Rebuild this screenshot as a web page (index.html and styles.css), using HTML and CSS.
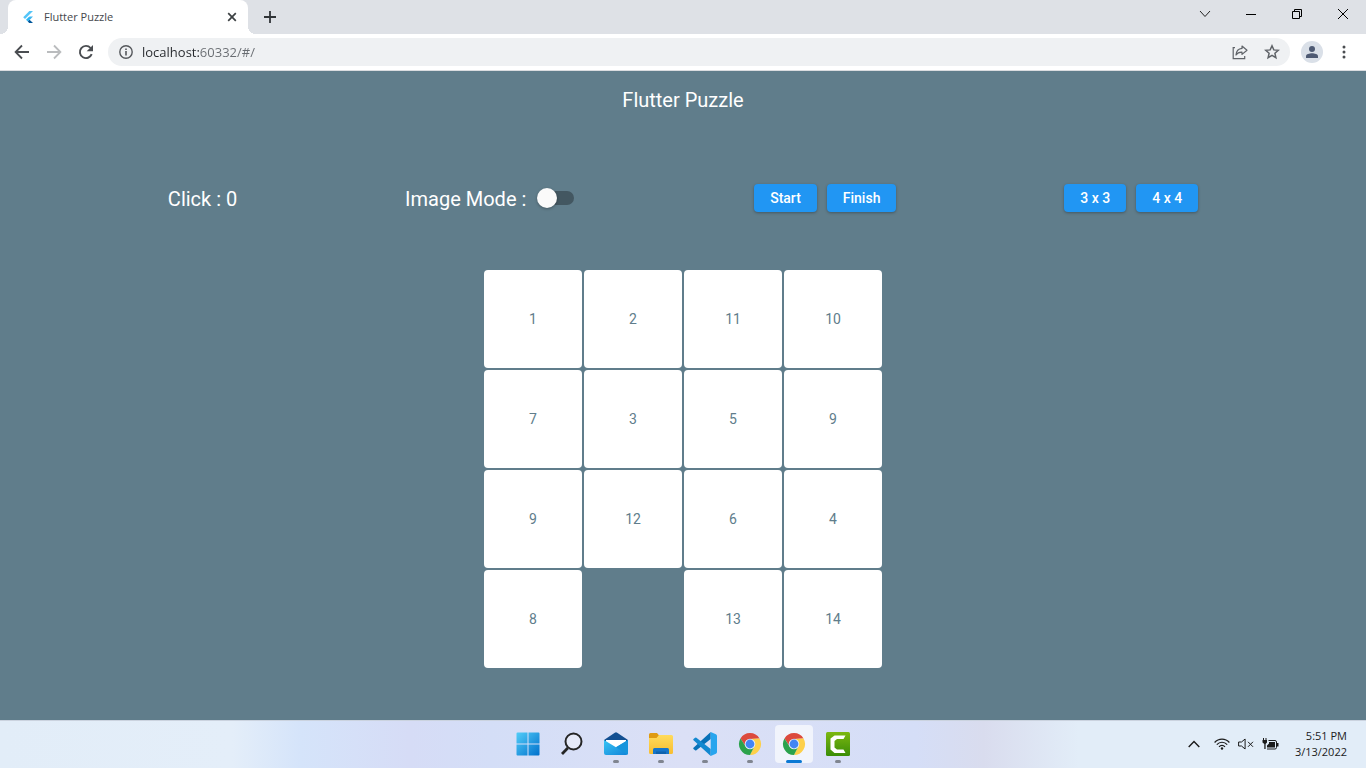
FILE: index.html
```html
<!DOCTYPE html>
<html lang="en">

<head>
    <meta charset="utf-8">
    <meta name="viewport" content="width=device-width, initial-scale=1">
    <title>Flutter Puzzle</title>
    <link rel="stylesheet" href="styles.css">
</head>

<body>

    <!-- browser window -->
    <header class="browser">
        <div class="tab-strip">
            <div class="tab">
                <svg class="favicon" width="12" height="14" viewBox="0 0 12 14">
                    <path fill="#54c5f8" d="M7.4 1H11L3 9 1.200 7.200z" />
                    <path fill="#40b6f0" d="M7.400 6.600H11L8.400 9.200 6 9.200z" />
                    <path fill="#29b6f6" d="M4 9.800l2.800-2.800 1.800 1.800-2.800 2.800z" />
                    <path fill="#01579b" d="M5.800 11.600l1.800-1.800L11 13H7.200z" />
                </svg>
                <span class="tab-title">Flutter Puzzle</span>
                <button class="tab-close" aria-label="Close tab">
                    <svg width="10" height="10" viewBox="0 0 10 10"><path d="M1.200 1.200l7.600 7.600M8.800 1.200L1.200 8.800" stroke="#3c4043" stroke-width="1.700" /></svg>
                </button>
            </div>
            <button class="new-tab" aria-label="New tab">
                <svg width="12" height="12" viewBox="0 0 12 12"><path d="M6 0v12M0 6h12" stroke="#303438" stroke-width="1.800" /></svg>
            </button>
            <div class="window-buttons">
                <button aria-label="Search tabs"><svg width="12" height="12" viewBox="0 0 12 12"><path d="M1 3l5 5.500L11 3" fill="none" stroke="#222" /></svg></button>
                <button aria-label="Minimize"><svg width="10" height="12" viewBox="0 0 10 12"><path d="M0 6.500h10" stroke="#000" /></svg></button>
                <button aria-label="Restore"><svg width="10" height="10" viewBox="0 0 10 10"><path d="M.5 2.500h7v7h-7zM2.500 2.500v-2h7v7h-2" fill="none" stroke="#000" /></svg></button>
                <button aria-label="Close"><svg width="12" height="12" viewBox="0 0 12 12"><path d="M1 1l10 10M11 1L1 11" stroke="#000" /></svg></button>
            </div>
        </div>

        <div class="toolbar">
            <button class="tool" aria-label="Back">
                <svg width="16" height="16" viewBox="0 0 16 16"><path d="M15 8H2M8 1.500L1.600 8 8 14.500" fill="none" stroke="#4a4d51" stroke-width="1.800" /></svg>
            </button>
            <button class="tool" aria-label="Forward">
                <svg width="16" height="16" viewBox="0 0 16 16"><path d="M1 8h13M8 1.500L14.400 8 8 14.500" fill="none" stroke="#babcbe" stroke-width="1.800" /></svg>
            </button>
            <button class="tool" aria-label="Reload">
                <svg width="16" height="16" viewBox="0 0 16 16">
                    <path d="M13.700 10.200A6.100 6.100 0 1 1 12.600 4" fill="none" stroke="#4a4d51" stroke-width="1.900" />
                    <path d="M15 1v6.300H8.700z" fill="#4a4d51" />
                </svg>
            </button>
            <div class="address">
                <svg class="info" width="14" height="14" viewBox="0 0 14 14">
                    <circle cx="7" cy="7" r="6.200" fill="none" stroke="#55585c" stroke-width="1.400" />
                    <path d="M7 6v4.500M7 3.400v1.500" stroke="#55585c" stroke-width="1.600" />
                </svg>
                <input class="url" type="text" aria-label="Address" value="localhost:60332/#/" spellcheck="false">
                <button class="tool" aria-label="Share">
                    <svg width="16" height="16" viewBox="0 0 16 16" fill="none" stroke="#5f6368" stroke-width="1.200">
                        <path d="M3 3.600H1.200v11h11.500V12" />
                        <path d="M10 2L15 6.200 10 10.400V8.200C7.200 8.100 5.300 9 4 11 4.300 7.200 6.300 4.800 10 4.400z" stroke-linejoin="round" />
                    </svg>
                </button>
                <button class="tool" aria-label="Bookmark">
                    <svg width="16" height="16" viewBox="0 0 16 16"><path d="M8 1.800l1.800 4.100 4.500.4-3.400 3 1 4.400L8 11.400l-3.900 2.300 1-4.400-3.400-3 4.500-.4z" fill="none" stroke="#5f6368" stroke-width="1.500" /></svg>
                </button>
            </div>
            <button class="avatar" aria-label="Profile">
                <svg width="12" height="12" viewBox="0 0 12 12" fill="#4e5a73"><circle cx="6" cy="3" r="3" /><path d="M0 12v-1.800C0 8.200 3.500 7.300 6 7.300s6 .9 6 2.900V12z" /></svg>
            </button>
            <button class="tool menu" aria-label="Menu">
                <svg width="4" height="14" viewBox="0 0 4 14" fill="#4a4d51"><circle cx="2" cy="2" r="1.500" /><circle cx="2" cy="7" r="1.500" /><circle cx="2" cy="12" r="1.500" /></svg>
            </button>
        </div>
    </header>

    <!-- puzzle -->
    <main class="app">
        <h1 class="app-title">Flutter Puzzle</h1>

        <div class="controls">
            <p class="counter">Click : 0</p>
            <div class="image-mode">
                <label for="imageMode">Image Mode :</label>
                <input class="switch" type="checkbox" id="imageMode" role="switch">
            </div>
            <div class="button-group">
                <button class="btn">Start</button>
                <button class="btn">Finish</button>
            </div>
            <div class="button-group">
                <button class="btn">3 x 3</button>
                <button class="btn">4 x 4</button>
            </div>
        </div>

        <div class="board">
            <button class="tile">1</button>
            <button class="tile">2</button>
            <button class="tile">11</button>
            <button class="tile">10</button>
            <button class="tile">7</button>
            <button class="tile">3</button>
            <button class="tile">5</button>
            <button class="tile">9</button>
            <button class="tile">9</button>
            <button class="tile">12</button>
            <button class="tile">6</button>
            <button class="tile">4</button>
            <button class="tile">8</button>
            <span class="empty"></span>
            <button class="tile">13</button>
            <button class="tile">14</button>
        </div>
    </main>

    <!-- taskbar -->
    <footer class="taskbar">
        <svg width="0" height="0" class="defs">
            <defs>
                <linearGradient id="win" x1="0" y1="0" x2="1" y2="1">
                    <stop offset="0" stop-color="#52cdf8" />
                    <stop offset="1" stop-color="#0070cc" />
                </linearGradient>
                <linearGradient id="mailFront" x1="0" y1="0" x2="1" y2="1">
                    <stop offset="0" stop-color="#38c4f4" />
                    <stop offset="1" stop-color="#1183d8" />
                </linearGradient>
                <linearGradient id="folderFront" x1="0" y1="0" x2="0" y2="1">
                    <stop offset="0" stop-color="#ffdb5c" />
                    <stop offset="1" stop-color="#f8bd30" />
                </linearGradient>
                <linearGradient id="camtasia" x1="0" y1="0" x2="0" y2="1">
                    <stop offset="0" stop-color="#7cb810" />
                    <stop offset="1" stop-color="#3a8d08" />
                </linearGradient>
                <symbol id="chrome" viewBox="0 0 24 24">
                    <path fill="#dc4a3d" d="M2.470 6.500A11 11 0 0 1 21.530 6.500L12 7 7.670 14.500z" />
                    <path fill="#fdd04a" d="M21.530 6.500A11 11 0 0 1 12 23L16.330 14.500 12 7z" />
                    <path fill="#2ba24c" d="M12 23A11 11 0 0 1 2.470 6.500L7.670 14.500H16.330z" />
                    <circle cx="12" cy="12" r="5.300" fill="#e8effb" />
                    <circle cx="12" cy="12" r="4.400" fill="#4285f4" />
                </symbol>
            </defs>
        </svg>

        <nav class="task-apps">
            <button class="task" aria-label="Start menu">
                <svg width="24" height="24" viewBox="0 0 24 24" fill="url(#win)"><path d="M1.500.5h10v11H.5v-10a1 1 0 0 1 1-1zM12.500.5h10a1 1 0 0 1 1 1v10h-11zM.5 12.500h11v11h-10a1 1 0 0 1-1-1zM12.500 12.500h11v10a1 1 0 0 1-1 1h-10z" /></svg>
            </button>
            <button class="task" aria-label="Search">
                <svg width="24" height="24" viewBox="0 0 24 24" fill="none" stroke="#252525"><circle cx="13.500" cy="9.500" r="8" fill="#e6eaf8" stroke-width="2" /><path d="M7.800 16L2 22" stroke-width="2.800" /></svg>
            </button>
            <button class="task open" aria-label="Mail">
                <svg width="26" height="24" viewBox="0 0 26 24">
                    <path fill="#124f91" d="M1 8L11.800.8a2 2 0 0 1 2.400 0L25 8v4H1z" />
                    <path fill="#fff" d="M3 8h20v8H3z" />
                    <path fill="url(#mailFront)" d="M1 8l12 7.200L25 8v13a2 2 0 0 1-2 2H3a2 2 0 0 1-2-2z" />
                    <path fill="#1694dc" d="M25 8v13c0 .7-.3 1.200-.8 1.600L13 15.200z" />
                </svg>
            </button>
            <button class="task open" aria-label="Files">
                <svg width="26" height="24" viewBox="0 0 26 24">
                    <path fill="#df9b13" d="M1 2.500A1.500 1.500 0 0 1 2.500 1H9l2.500 3-3 3H1z" />
                    <path fill="url(#folderFront)" d="M1 6h7.500L11 3h12.500A1.500 1.500 0 0 1 25 4.500v16a1.500 1.500 0 0 1-1.500 1.500h-21A1.500 1.500 0 0 1 1 20.500z" />
                    <path fill="#1675ca" d="M5 22v-4.500A1.500 1.500 0 0 1 6.500 16h13a1.500 1.500 0 0 1 1.500 1.500V22z" />
                    <path fill="#0f62ae" d="M8 19.500h10V22H8z" />
                </svg>
            </button>
            <button class="task open" aria-label="Code editor">
                <svg width="26" height="24" viewBox="0 0 26 24">
                    <path fill="#0871b8" d="M18.700 0L1.500 15.700a.8.800 0 0 0 0 1.200l1.600 1.400a1 1 0 0 0 1.300 0L18.700 7z" />
                    <path fill="#1388d0" d="M18.700 24L1.500 8.300a.8.800 0 0 1 0-1.200l1.600-1.400a1 1 0 0 1 1.300 0L18.700 17z" />
                    <path fill="#28a5ee" d="M18.700 0l5.200 2.300a2 2 0 0 1 1.100 1.800v15.800a2 2 0 0 1-1.100 1.800L18.700 24z" />
                </svg>
            </button>
            <button class="task open" aria-label="Chrome">
                <svg width="24" height="24"><use href="#chrome" /></svg>
            </button>
            <button class="task open active" aria-label="Chrome, Flutter Puzzle">
                <svg width="24" height="24"><use href="#chrome" /></svg>
            </button>
            <button class="task open" aria-label="Camtasia">
                <svg width="24" height="24" viewBox="0 0 24 24">
                    <rect width="24" height="24" rx="1.500" fill="url(#camtasia)" />
                    <path fill="#fff" d="M19.500 3.500L17.500 7H11L8.500 9v6.500L11 17.500h6.500l2 3.500H8.500L4.500 17.500v-11l4-3z" />
                </svg>
            </button>
        </nav>

        <div class="tray">
            <button class="tray-icon" aria-label="Hidden icons"><svg width="12" height="8" viewBox="0 0 12 8"><path d="M.7 7L6 1.500 11.300 7" fill="none" stroke="#1b1b1b" stroke-width="1.400" /></svg></button>
            <button class="tray-status" aria-label="Network, sound and battery">
                <svg width="16" height="12" viewBox="0 0 16 12" fill="none" stroke="#1b1b1b" stroke-width="1.200">
                    <path d="M.6 4.500c4-4.600 10.800-4.600 14.800 0M2.800 6.700c2.900-3.300 7.500-3.300 10.400 0M5 8.800c1.700-1.900 4.300-1.900 6 0" />
                    <circle cx="8" cy="10.500" r="1.200" fill="#1b1b1b" stroke="none" />
                </svg>
                <svg width="16" height="12" viewBox="0 0 16 12" fill="none" stroke="#1b1b1b">
                    <path d="M.6 4v4h2.900l3.600 3V1L3.500 4z" stroke-linejoin="round" />
                    <path d="M10 3.800l5 5M15 3.800l-5 5" />
                </svg>
                <svg width="17" height="12" viewBox="0 0 17 12" fill="#1b1b1b">
                    <path d="M1 0h1v2h1.500V0h1v2H5v2.500L3.600 6v5H2.300V6L.5 4.500V2H1z" />
                    <path d="M6.500 2.500H13a1.500 1.500 0 0 1 1.500 1.500v5.500A1.500 1.500 0 0 1 13 11H5" fill="none" stroke="#1b1b1b" />
                    <path d="M7 4h6v5.500H5V7.500l2-2zM15 5h1.500v3.500H15z" />
                </svg>
            </button>
            <time class="clock" datetime="2022-03-13T17:51">5:51 PM<br>3/13/2022</time>
        </div>
    </footer>

</body>

</html>
```

FILE: styles.css
```css
* {
    box-sizing: border-box;
}

body {
    margin: 0;
    min-height: 100vh;
    display: flex;
    flex-direction: column;
    font-family: Roboto, "Liberation Sans", sans-serif;
}

button {
    margin: 0;
    padding: 0;
    border: 0;
    background: none;
    font-family: inherit;
    cursor: pointer;
}

svg {
    display: block;
    flex: none;
}

/* browser window */

.tab-strip {
    display: flex;
    height: 34px;
    padding-left: 8px;
    background: #dee1e6;
}

.tab {
    position: relative;
    display: flex;
    align-items: center;
    width: 240px;
    padding: 0 10px 0 14px;
    background: #fff;
    border-radius: 8px 8px 0 0;
}

/* curved feet of the tab */
.tab::before,
.tab::after {
    content: "";
    position: absolute;
    bottom: 0;
    width: 8px;
    height: 8px;
}

.tab::before {
    left: -8px;
    background: radial-gradient(circle at 0 0, #dee1e6 8px, #fff 8px);
}

.tab::after {
    right: -8px;
    background: radial-gradient(circle at 100% 0, #dee1e6 8px, #fff 8px);
}

.tab-title {
    flex: 1;
    padding: 0 0 2px 10px;
    font-family: "Open Sans", sans-serif;
    font-size: 11px;
    color: #45484c;
}

.tab-close {
    display: grid;
    place-items: center;
    width: 12px;
    height: 16px;
}

.new-tab {
    display: grid;
    place-items: center;
    width: 28px;
    margin-left: 8px;
}

.window-buttons {
    display: flex;
    margin-left: auto;
}

.window-buttons button {
    display: grid;
    place-items: center;
    width: 46px;
    height: 28px;
}

.toolbar {
    display: flex;
    align-items: center;
    height: 37px;
    padding: 0 6px;
    background: #fff;
    border-bottom: 1px solid #dadce0;
}

.tool {
    display: grid;
    place-items: center;
    flex: none;
    width: 32px;
    height: 28px;
}

.address {
    display: flex;
    align-items: center;
    flex: 1;
    height: 28px;
    margin-left: 6px;
    padding: 0 2px 0 11px;
    background: #eff1f3;
    border-radius: 14px;
}

/* host is darker than the rest of the address */
.url {
    flex: 1;
    min-width: 0;
    margin-left: 9px;
    padding: 0;
    border: 0;
    outline: none;
    font-family: "Open Sans", sans-serif;
    font-size: 13px;
    color: #55595e;
    background: linear-gradient(90deg, #25282c 57px, #686c71 57px);
    -webkit-background-clip: text;
    background-clip: text;
    -webkit-text-fill-color: transparent;
}

.avatar {
    display: grid;
    place-items: center;
    width: 22px;
    height: 22px;
    margin-left: 11px;
    background: #dae0e8;
    border-radius: 50%;
}

.menu {
    margin-left: 5px;
}

/* puzzle */

.app {
    flex: 1;
    display: flex;
    flex-direction: column;
    align-items: center;
    padding-bottom: 48px;
    background: #607d8b;
    color: #fff;
}

.app-title {
    margin: 0;
    font-size: 20px;
    font-weight: 400;
    line-height: 58px;
}

.controls {
    display: flex;
    justify-content: space-evenly;
    align-items: center;
    align-self: stretch;
    height: 48px;
    margin: 45px 0 47px;
    font-size: 20px;
}

.counter {
    margin: 0;
}

.counter,
.image-mode label {
    padding-top: 2px;
}

.image-mode {
    display: flex;
    align-items: center;
}

.switch {
    appearance: none;
    position: relative;
    width: 34px;
    height: 14px;
    margin: 0 12px 0 14px;
    border-radius: 7px;
    background: #435761;
    cursor: pointer;
}

.switch::before {
    content: "";
    position: absolute;
    top: -3px;
    left: -3px;
    width: 20px;
    height: 20px;
    border-radius: 50%;
    background: #fafafa;
    box-shadow: 0 1px 3px rgba(0, 0, 0, .3);
}

.switch:checked::before {
    left: 17px;
}

.button-group {
    display: flex;
    gap: 10px;
}

.btn {
    height: 28px;
    padding: 0 16px;
    border-radius: 4px;
    background: #2196f3;
    box-shadow: 0 1px 3px rgba(0, 0, 0, .3);
    font-size: 14px;
    font-weight: 500;
    color: #fff;
}

.btn:hover {
    background: #39a1f4;
}

.board {
    display: grid;
    grid-template-columns: repeat(4, 98px);
    grid-auto-rows: 98px;
    gap: 2px;
    padding: 1px;
}

.tile {
    border-radius: 4px;
    background: #fff;
    font-size: 14px;
    color: #607d8b;
}

/* taskbar */

.taskbar {
    display: grid;
    grid-template-columns: 1fr 355px 1fr;
    align-items: center;
    height: 48px;
    box-shadow: inset 0 1px #cbd3df;
    background: linear-gradient(90deg, #e2edf8 0%, #e4eef9 17%, #d5e4fa 22%, #d6dcf6 30%, #d4def7 36%, #dbe0f6 50%, #d5def7 67%, #d9dcee 72%, #e2edf8 79%, #e2edf8 100%);
}

.defs {
    position: absolute;
}

.task-apps {
    grid-column: 2;
    display: grid;
    grid-template-columns: repeat(8, 1fr);
    justify-items: center;
}

.task {
    position: relative;
    display: grid;
    place-items: center;
    width: 38px;
    height: 38px;
    border-radius: 4px;
}

.task.active {
    background: #f1f4fc;
}

/* running marker */
.task.open::after {
    content: "";
    position: absolute;
    bottom: 0;
    left: 16px;
    width: 6px;
    height: 3px;
    border-radius: 2px;
    background: #808590;
}

.task.active::after {
    left: 11px;
    width: 16px;
    background: #0a78d4;
}

.tray {
    display: flex;
    align-items: center;
    justify-content: flex-end;
    padding-right: 19px;
}

.tray-icon {
    display: grid;
    place-items: center;
    width: 28px;
    height: 38px;
}

.tray-status {
    display: flex;
    align-items: center;
    gap: 8px;
    height: 38px;
    margin: 0 16px 0 6px;
}

.clock {
    font-family: "Open Sans", sans-serif;
    font-size: 11px;
    line-height: 16px;
    text-align: right;
    color: #1b1b1b;
}
```
